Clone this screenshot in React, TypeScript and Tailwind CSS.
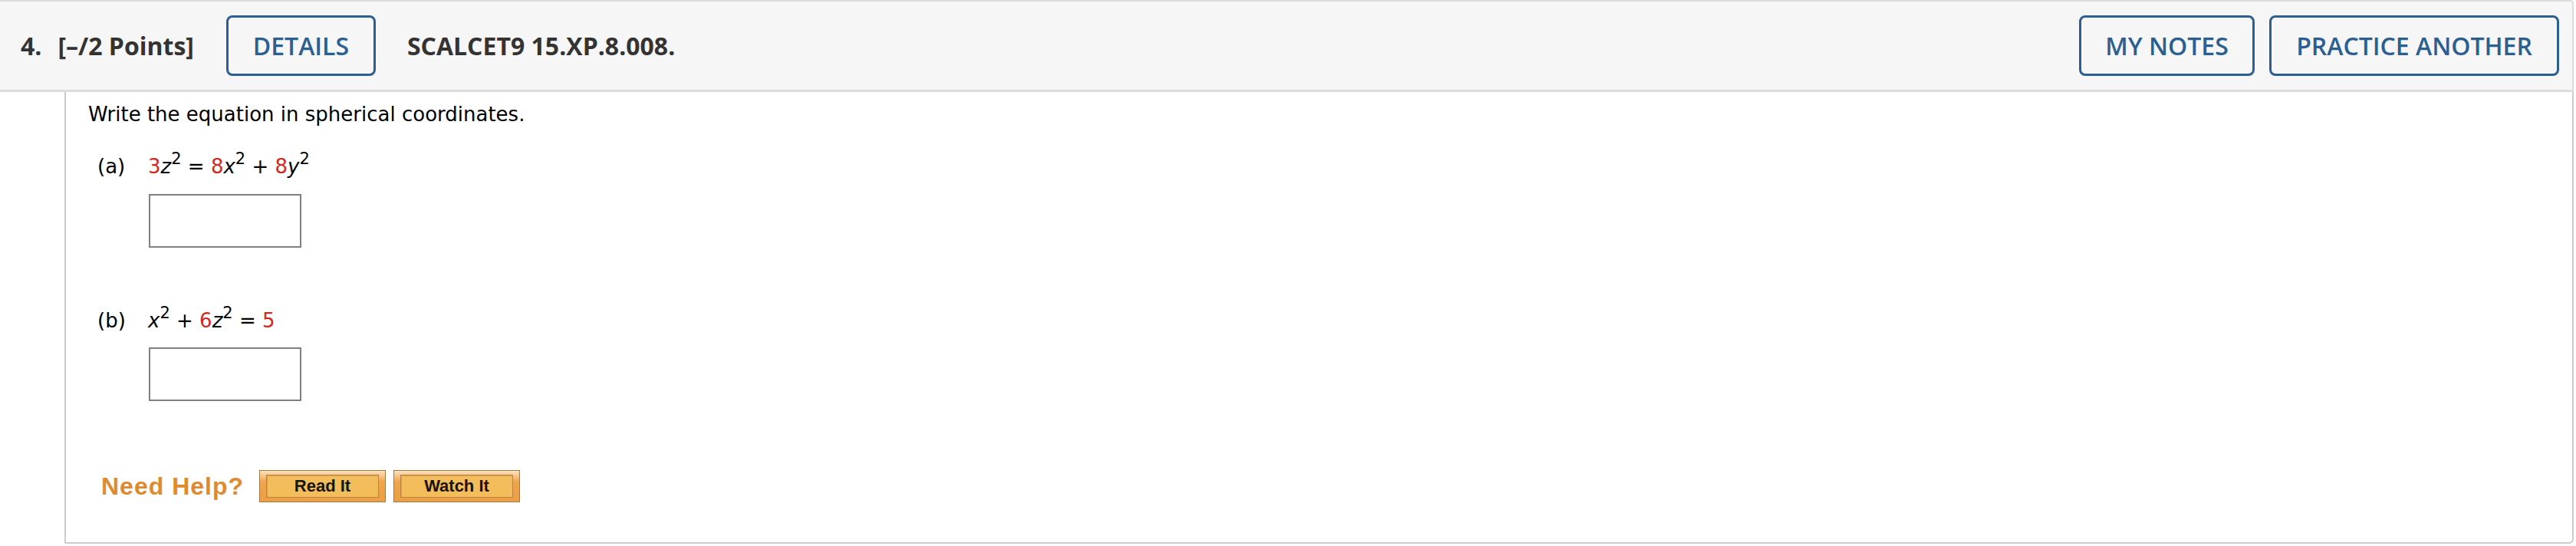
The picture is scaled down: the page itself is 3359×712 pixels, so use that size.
import type { ReactNode } from "react";

const Sup = ({ children }: { children: ReactNode }) => (
  <span className="relative -top-[12px] text-[21px] leading-none">{children}</span>
);

const Red = ({ children }: { children: ReactNode }) => (
  <span className="text-[#cf2a1f]">{children}</span>
);

const V = ({ children }: { children: ReactNode }) => <span className="italic">{children}</span>;

const HeaderButton = ({ label, width }: { label: string; width: string }) => (
  <button
    className={`${width} h-[79px] flex items-center justify-center border-[3px] border-[#2b5f91] rounded-[8px] bg-transparent text-[#2b5f91] text-[32px] font-semibold leading-none`}
  >
    {label}
  </button>
);

const HelpButton = ({ label }: { label: string }) => (
  <div className="w-[165px] h-[42px] border border-[#a5763e] bg-linear-to-b from-[#fbe2bd] via-[#efa54b] via-35% to-[#ec9f43] px-[8px] py-[5px]">
    <div className="h-full border border-[#b98445] bg-[#f2bd5a] shadow-[inset_1px_1px_0_#d9a04f] flex items-center justify-center font-['Liberation_Sans',Arial,sans-serif] font-bold text-[22px] text-[#1a1408] leading-none">
      {label}
    </div>
  </div>
);

const AnswerBox = () => (
  <div className="ml-[67px] w-[199px] h-[70px] border-2 border-[#808080] bg-white" />
);

export default function App() {
  return (
    <div className="w-[3356px] min-h-[712px] bg-white">
      <div className="h-[120px] flex items-center bg-[#f6f6f6] border-t-2 border-b-[3px] border-r-2 border-[#dcdcdc] rounded-tr-[4px] pl-[27px] pr-[17px] font-['Open_Sans',sans-serif] text-[#333333]">
        <span className="text-[32px] font-bold mr-[21px]">4.</span>
        <span className="text-[32px] font-bold">[–/2 Points]</span>
        <div className="ml-[42px]">
          <HeaderButton label="DETAILS" width="w-[195px]" />
        </div>
        <span className="ml-[41px] text-[32px] font-bold">SCALCET9 15.XP.8.008.</span>
        <div className="ml-auto flex gap-[19px]">
          <HeaderButton label="MY NOTES" width="w-[229px]" />
          <HeaderButton label="PRACTICE ANOTHER" width="w-[378px]" />
        </div>
      </div>

      <div className="ml-[84px] border-l-2 border-r-2 border-b-2 border-[#cccccc] rounded-br-[6px] pl-[29px] pt-[13px] pb-[52px] font-['DejaVu_Sans',Verdana,sans-serif] text-[26px] text-black">
        <p className="leading-[32px]">Write the equation in spherical coordinates.</p>

        <div className="ml-[12px]">
          <div className="mt-[36px] flex leading-[32px]">
            <span className="w-[66px]">(a)</span>
            <span>
              <Red>3</Red>
              <V>z</V>
              <Sup>2</Sup> = <Red>8</Red>
              <V>x</V>
              <Sup>2</Sup> + <Red>8</Red>
              <V>y</V>
              <Sup>2</Sup>
            </span>
          </div>
          <div className="mt-[20px]">
            <AnswerBox />
          </div>

          <div className="mt-[79px] flex leading-[32px]">
            <span className="w-[66px]">(b)</span>
            <span>
              <V>x</V>
              <Sup>2</Sup> + <Red>6</Red>
              <V>z</V>
              <Sup>2</Sup> = <Red>5</Red>
            </span>
          </div>
          <div className="mt-[19px]">
            <AnswerBox />
          </div>
        </div>

        <div className="mt-[90px] ml-[17px] flex items-center">
          <span className="w-[206px] font-['Liberation_Sans',Arial,sans-serif] font-bold text-[32px] tracking-[1px] text-[#e08a30] leading-none">
            Need Help?
          </span>
          <div className="flex gap-[10px]">
            <HelpButton label="Read It" />
            <HelpButton label="Watch It" />
          </div>
        </div>
      </div>
    </div>
  );
}
